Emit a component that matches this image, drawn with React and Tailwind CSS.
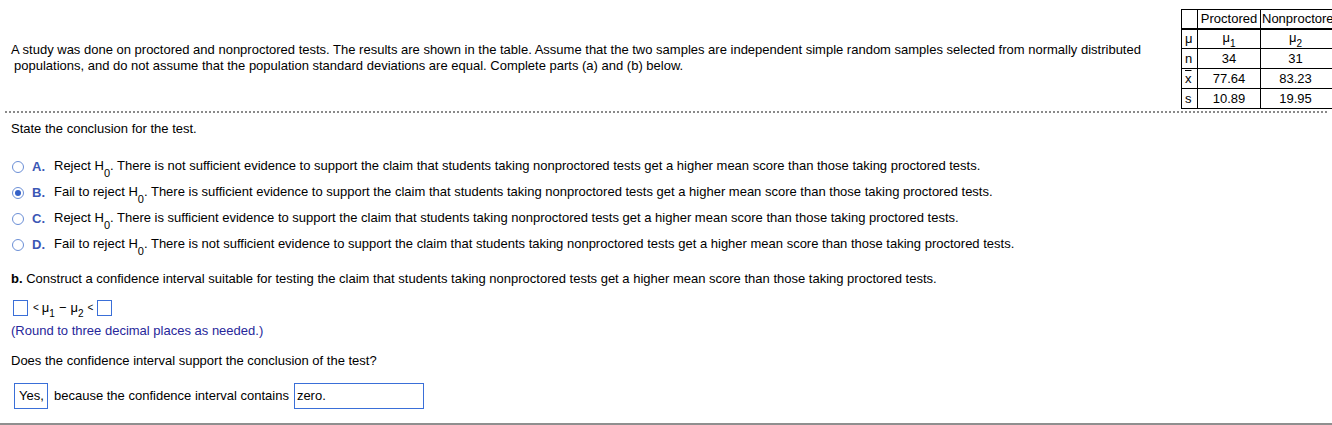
import React from 'react';

const font = { fontFamily: '"Liberation Sans", Arial, sans-serif' };

const Mu = ({ sub }) => (
  <span>
    μ<sub className="text-[10px] align-[-3px] leading-none">{sub}</sub>
  </span>
);

const H0 = () => (
  <span>
    H<sub className="text-[11px] align-[-4px] leading-none">0</sub>
  </span>
);

const Radio = ({ checked }) => (
  <span className="w-[12px] h-[12px] rounded-full border border-[#6b8fd6] bg-white flex items-center justify-center shrink-0">
    {checked && <span className="w-[6px] h-[6px] rounded-full bg-[#3461c7]" />}
  </span>
);

const Option = ({ letter, verdict, body, checked }) => (
  <div className="flex items-center h-[26px]">
    <div className="w-[32px] flex justify-end pr-[8px]">
      <Radio checked={checked} />
    </div>
    <span className="w-[22px] font-bold text-[#3b57b5]">{letter}.</span>
    <span>
      {verdict} <H0 />. {body}
    </span>
  </div>
);

const DataTable = () => (
  <table className="border-collapse table-fixed text-[13px] leading-none mt-[9px] w-[159px]">
    <thead>
      <tr className="h-[19px] border-b-2 border-black">
        <th className="border border-black w-[16px]" />
        <th className="border border-black w-[63px] font-normal text-center">Proctored</th>
        <th className="border border-black w-[80px] font-normal text-left pl-[1px] whitespace-nowrap">Nonproctored</th>
      </tr>
    </thead>
    <tbody>
      {[
        ['μ', <Mu sub="1" />, <Mu sub="2" />],
        ['n', '34', '31'],
        [<span className="overline">x</span>, '77.64', '83.23'],
        ['s', '10.89', '19.95'],
      ].map((r, i) => (
        <tr key={i} className="h-[20px]">
          <td className="border border-black text-left pl-[3px]">{r[0]}</td>
          <td className="border border-black text-center">{r[1]}</td>
          <td className="border border-black text-center pr-[10px]">{r[2]}</td>
        </tr>
      ))}
    </tbody>
  </table>
);

export default function App() {
  return (
    <div style={font} className="w-[1332px] h-[425px] overflow-hidden bg-white text-[13px] text-black leading-[16px] flex flex-col">
      <div className="flex items-start h-[107px]">
        <div className="flex-1 min-w-0 pl-[11px] pt-[42px]">
          <p className="whitespace-nowrap">
            A study was done on proctored and nonproctored tests. The results are shown in the table. Assume that the two samples are independent simple random samples selected from normally distributed
          </p>
          <p className="pl-[3px] whitespace-nowrap">
            populations, and do not assume that the population standard deviations are equal. Complete parts (a) and (b) below.
          </p>
        </div>
        <div className="w-[151px] shrink-0">
          <DataTable />
        </div>
      </div>

      <div className="mt-[4px] mx-[5px] border-t-2 border-dotted border-[#8a8a8a]" />

      <p className="pl-[11px] mt-[8px]">State the conclusion for the test.</p>

      <div className="mt-[17px]">
        <Option letter="A" verdict="Reject" body="There is not sufficient evidence to support the claim that students taking nonproctored tests get a higher mean score than those taking proctored tests." />
        <Option letter="B" checked verdict="Fail to reject" body="There is sufficient evidence to support the claim that students taking nonproctored tests get a higher mean score than those taking proctored tests." />
        <Option letter="C" verdict="Reject" body="There is sufficient evidence to support the claim that students taking nonproctored tests get a higher mean score than those taking proctored tests." />
        <Option letter="D" verdict="Fail to reject" body="There is not sufficient evidence to support the claim that students taking nonproctored tests get a higher mean score than those taking proctored tests." />
      </div>

      <p className="pl-[11px] mt-[13px]">
        <span className="font-bold">b.</span> Construct a confidence interval suitable for testing the claim that students taking nonproctored tests get a higher mean score than those taking proctored tests.
      </p>

      <div className="flex items-center pl-[13px] mt-[13px] h-[16px]">
        <span className="w-[15px] h-[16px] border border-[#3a6fd8]" />
        <span className="text-[10px] ml-[5px]">&lt;</span>
        <span className="ml-[3px]"><Mu sub="1" /></span>
        <span className="ml-[4px]">−</span>
        <span className="ml-[4px]"><Mu sub="2" /></span>
        <span className="text-[10px] ml-[4px]">&lt;</span>
        <span className="w-[15px] h-[16px] border border-[#3a6fd8] ml-[4px]" />
      </div>

      <p className="pl-[11px] mt-[7px] text-[#27279a]">(Round to three decimal places as needed.)</p>

      <p className="pl-[11px] mt-[14px]">Does the confidence interval support the conclusion of the test?</p>

      <div className="flex items-center pl-[14px] mt-[14px]">
        <span className="h-[26px] w-[34px] border border-[#3a6fd8] flex items-center pl-[4px]">Yes,</span>
        <span className="ml-[6px]">because the confidence interval contains</span>
        <span className="h-[26px] w-[130px] border border-[#3a6fd8] flex items-center pl-[2px] ml-[5px]">zero.</span>
      </div>

      <div className="mt-auto border-t-2 border-[#8f8f8f]" />
    </div>
  );
}
